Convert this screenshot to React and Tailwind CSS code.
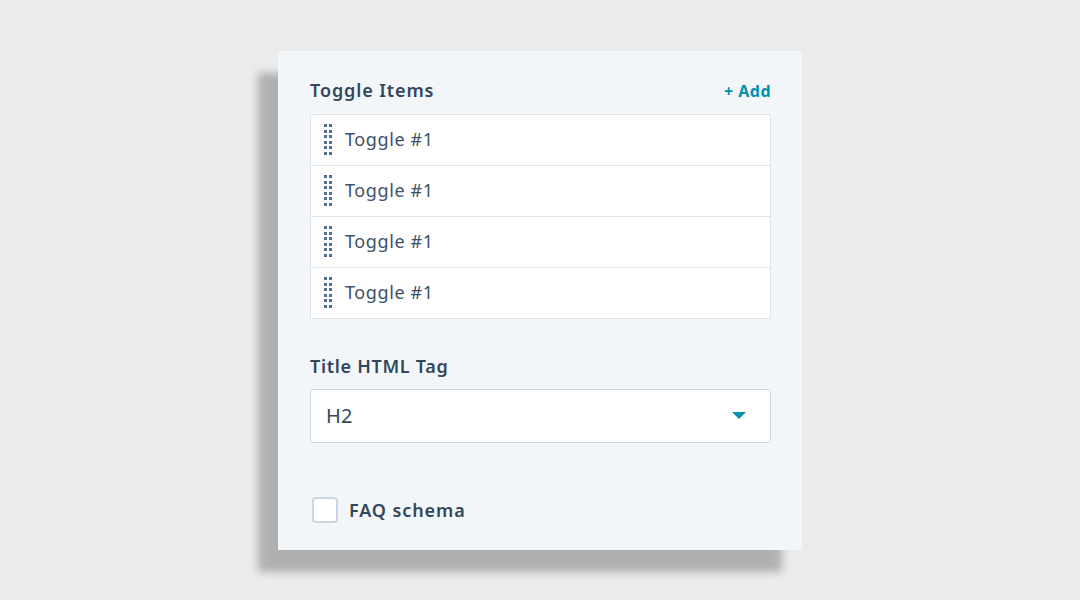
import React from 'react';

const font = { fontFamily: '"Noto Sans", "Open Sans", sans-serif' };

const DragHandle = () => (
  <div className="grid grid-cols-2 gap-x-[2px] gap-y-[2.5px] w-[8px]">
    {Array.from({ length: 12 }).map((_, i) => (
      <span key={i} className="block w-[3px] h-[3px] bg-[#516f90]" />
    ))}
  </div>
);

const items = ['Toggle #1', 'Toggle #1', 'Toggle #1', 'Toggle #1'];

export default function App() {
  return (
    <div
      className="w-full h-[600px] bg-[#ebebeb] flex items-center justify-center"
      style={font}
    >
      <div className="w-[524px] h-[499px] bg-[#f3f6f9] pl-8 pr-[31px] pt-[29px] shadow-[-20px_22px_8px_rgba(0,0,0,0.25)]">
        {/* Toggle items */}
        <div className="flex items-center justify-between h-[22px] mb-3">
          <span className="text-[18px] font-semibold tracking-[0.9px] text-[#33475b]">Toggle Items</span>
          <button className="text-[16px] font-bold tracking-[0.5px] text-[#0091ae]">+ Add</button>
        </div>
        <div className="border border-[#dfe3eb] bg-white">
          {items.map((label, idx) => (
            <div
              key={idx}
              className={
                'h-[50px] flex items-center pl-[13px] gap-[13px] ' +
                (idx > 0 ? 'border-t border-[#dfe3eb] h-[51px]' : '')
              }
            >
              <DragHandle />
              <span className="text-[18px] tracking-[0.6px] text-[#3d5269]">{label}</span>
            </div>
          ))}
        </div>

        {/* Title tag */}
        <div className="mt-[37px] h-[22px] flex items-center">
          <span className="text-[18px] font-semibold tracking-[0.7px] text-[#33475b]">Title HTML Tag</span>
        </div>
        <div className="mt-[11px] h-[54px] bg-white border border-[#cbd6e2] rounded-[3px] flex items-center justify-between pl-[15px] pr-[23px]">
          <span className="text-[20px] tracking-[0.3px] text-[#33475b]">H2</span>
          <svg width="16" height="8" viewBox="0 0 16 8">
            <path d="M1 0 L15 0 L8 7 Z" fill="#0091ae" />
          </svg>
        </div>

        {/* FAQ schema */}
        <label className="mt-[53px] flex items-center gap-[11px] pl-[2px]">
          <span className="w-[26px] h-[26px] rounded-[4px] border-2 border-[#cbd6e2] bg-white" />
          <span className="text-[18px] font-semibold tracking-[0.9px] text-[#33475b] mt-[1px]">FAQ schema</span>
        </label>
      </div>
    </div>
  );
}
